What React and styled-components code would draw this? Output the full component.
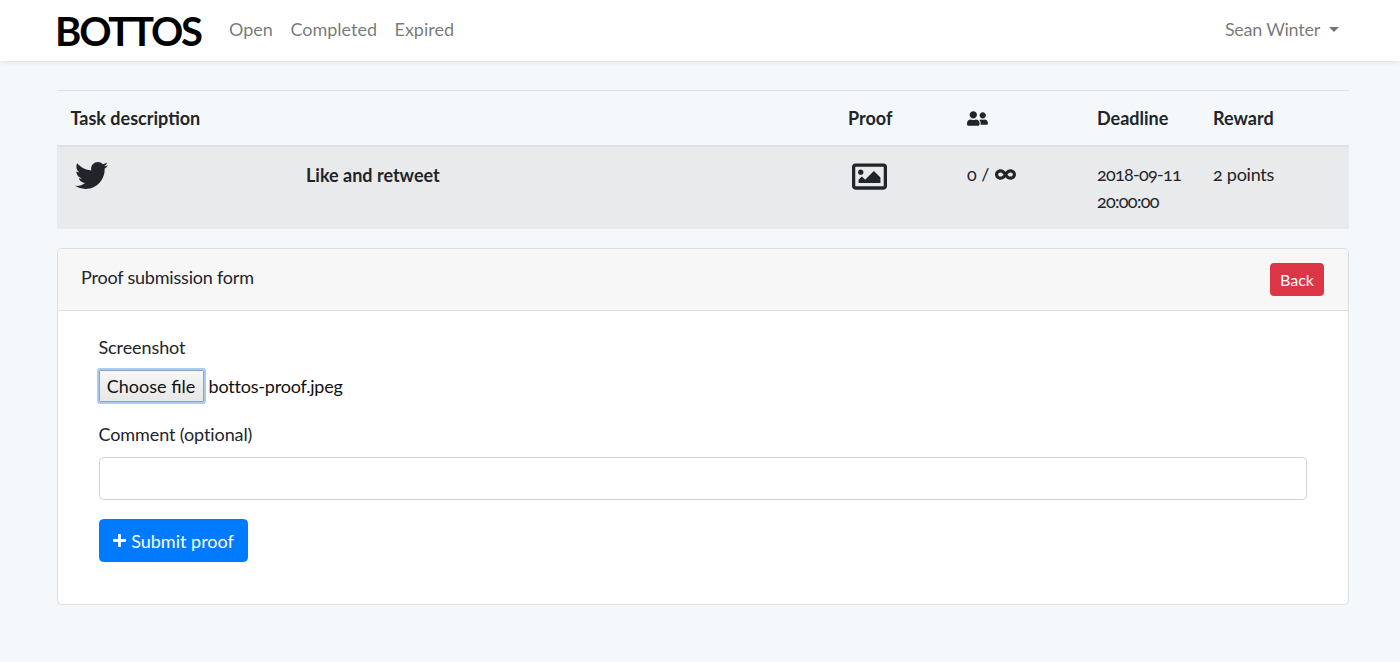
import React from "react";
import styled, { createGlobalStyle } from "styled-components";
import { FaTwitter, FaRegImage, FaUserFriends, FaInfinity, FaPlus } from "react-icons/fa";

const Global = createGlobalStyle`
  html, body { margin: 0; padding: 0; }
  body {
    background: #f5f8fb;
    color: #212529;
    font-family: "Lato", "Noto Sans", sans-serif;
    font-size: 18px;
    letter-spacing: 0;
    font-variant-numeric: oldstyle-nums;
    height: 662px;
    overflow: hidden;
  }
`;

const Navbar = styled.nav`
  height: 61px;
  box-sizing: border-box;
  background: #fff;
  box-shadow: 0 1px 4px rgba(0, 0, 0, 0.1);
  display: flex;
  align-items: center;
  padding: 0 61px 3px 57px;
`;
const Brand = styled.span`
  font-family: "Lato", sans-serif;
  font-weight: 700;
  font-size: 40px;
  line-height: 40px;
  letter-spacing: -2.2px;
  color: #000;
  width: 145px;
  margin-left: -2px;
  margin-right: 29px;
  margin-top: 3px;
  white-space: nowrap;
`;
const NavLinks = styled.div`
  display: flex;
  gap: 17.5px;
  flex: 1;
`;
const NavLink = styled.a`
  color: rgba(0, 0, 0, 0.55);
  font-size: 18px;
`;
const UserMenu = styled.a`
  display: flex;
  align-items: center;
  gap: 9px;
  color: rgba(0, 0, 0, 0.55);
  font-size: 18px;
  letter-spacing: -0.25px;
`;
const Caret = styled.span`
  width: 0;
  height: 0;
  border-top: 5px solid rgba(0, 0, 0, 0.55);
  border-left: 5px solid transparent;
  border-right: 5px solid transparent;
`;

const Container = styled.main`
  padding: 29px 51px 0 57px;
`;
const Row = styled.div`
  display: grid;
  grid-template-columns: 235.5px 542px 119px 130px 116px 149.5px;
`;
const HeadRow = styled(Row)`
  border-top: 1px solid #dee2e6;
  border-bottom: 2px solid #dee2e6;
  height: 54px;
  align-items: center;
  font-weight: 700;
`;
const HeadCell = styled.div`
  padding: 0 13.5px;
  white-space: nowrap;
  display: flex;
  align-items: center;
`;
const BodyRow = styled(Row)`
  background: #e9eaec;
  height: 82px;
`;
const Cell = styled.div`
  padding: 14px 13.5px 0;
  line-height: 27px;
  white-space: nowrap;
  display: flex;
  flex-direction: column;
  align-items: flex-start;
`;
const IconCell = styled(Cell)`
  padding-top: 12px;
`;
const TwitterIcon = styled(FaTwitter)`
  margin-left: 4px;
  font-size: 33px;
`;
const ImageIcon = styled(FaRegImage)`
  margin-left: 4px;
  font-size: 35px;
`;
const TitleText = styled.span`
  font-weight: 700;
  margin-top: 1px;
`;
const CountLine = styled.span`
  display: flex;
  align-items: center;
  gap: 6px;
`;
const DateText = styled.span`
  letter-spacing: -0.7px;
`;
const RewardText = styled.span`
  letter-spacing: -0.25px;
`;

const Card = styled.section`
  margin-top: 19px;
  background: #fff;
  border: 1px solid #dcdfe2;
  border-radius: 4.5px;
  height: 357px;
  box-sizing: border-box;
`;
const CardHeader = styled.header`
  height: 62px;
  box-sizing: border-box;
  background: #f7f7f7;
  border-bottom: 1px solid #dcdfe2;
  border-radius: 4px 4px 0 0;
  display: flex;
  align-items: center;
  justify-content: space-between;
  padding: 0 24px 0 23px;
`;
const CardTitle = styled.span`
  letter-spacing: -0.2px;
  margin-top: -6px;
`;
const BackButton = styled.button`
  width: 54px;
  height: 33px;
  padding: 0;
  background: #dc3545;
  color: #fff;
  border: 1px solid #dc3545;
  border-radius: 3.5px;
  font: inherit;
  font-size: 16px;
`;
const CardBody = styled.div`
  padding: 23px 40.5px 0;
  display: flex;
  flex-direction: column;
`;
const Label = styled.label`
  line-height: 27px;
  display: block;
  letter-spacing: -0.1px;
`;
const FileRow = styled.div`
  display: flex;
  align-items: center;
  gap: 5px;
  margin: 9px 0 19px;
  height: 32px;
`;
const ChooseButton = styled.button`
  width: 105px;
  height: 32px;
  padding: 0;
  box-sizing: border-box;
  background: linear-gradient(#f7f7f7, #e7e7e7);
  color: #111;
  border: 1px solid #8ca3bb;
  border-radius: 1px;
  outline: 2px solid #a9cdf2;
  font: inherit;
  font-size: 18px;
`;
const FileName = styled.span`
  color: #111;
  letter-spacing: -0.2px;
`;
const TextInput = styled.input`
  display: block;
  margin-top: 9px;
  height: 43px;
  box-sizing: border-box;
  width: 1208px;
  border: 1.5px solid #cfd2d6;
  border-radius: 4.5px;
  background: #fff;
`;
const SubmitButton = styled.button`
  display: flex;
  align-items: center;
  justify-content: center;
  gap: 4px;
  margin-top: 19px;
  width: 149px;
  height: 43px;
  padding: 0;
  background: #007bff;
  color: #fff;
  border: 1px solid #007bff;
  border-radius: 4.5px;
  font: inherit;
  font-size: 18px;
`;

export default function App() {
  return (
    <>
      <Global />
      <Navbar>
        <Brand>BOTTOS</Brand>
        <NavLinks>
          <NavLink>Open</NavLink>
          <NavLink>Completed</NavLink>
          <NavLink>Expired</NavLink>
        </NavLinks>
        <UserMenu>
          Sean Winter <Caret />
        </UserMenu>
      </Navbar>
      <Container>
        <HeadRow>
          <HeadCell>Task description</HeadCell>
          <HeadCell />
          <HeadCell>Proof</HeadCell>
          <HeadCell><FaUserFriends size={21} /></HeadCell>
          <HeadCell>Deadline</HeadCell>
          <HeadCell>Reward</HeadCell>
        </HeadRow>
        <BodyRow>
          <IconCell><TwitterIcon /></IconCell>
          <Cell><TitleText>Like and retweet</TitleText></Cell>
          <IconCell><ImageIcon /></IconCell>
          <Cell>
            <CountLine>0 / <FaInfinity size={21} /></CountLine>
          </Cell>
          <Cell><DateText>2018-09-11</DateText><DateText>20:00:00</DateText></Cell>
          <Cell><RewardText>2 points</RewardText></Cell>
        </BodyRow>
        <Card>
          <CardHeader>
            <CardTitle>Proof submission form</CardTitle>
            <BackButton>Back</BackButton>
          </CardHeader>
          <CardBody>
            <Label>Screenshot</Label>
            <FileRow>
              <ChooseButton>Choose file</ChooseButton>
              <FileName>bottos-proof.jpeg</FileName>
            </FileRow>
            <Label>Comment (optional)</Label>
            <TextInput />
            <SubmitButton><FaPlus size={15} /> Submit proof</SubmitButton>
          </CardBody>
        </Card>
      </Container>
    </>
  );
}
